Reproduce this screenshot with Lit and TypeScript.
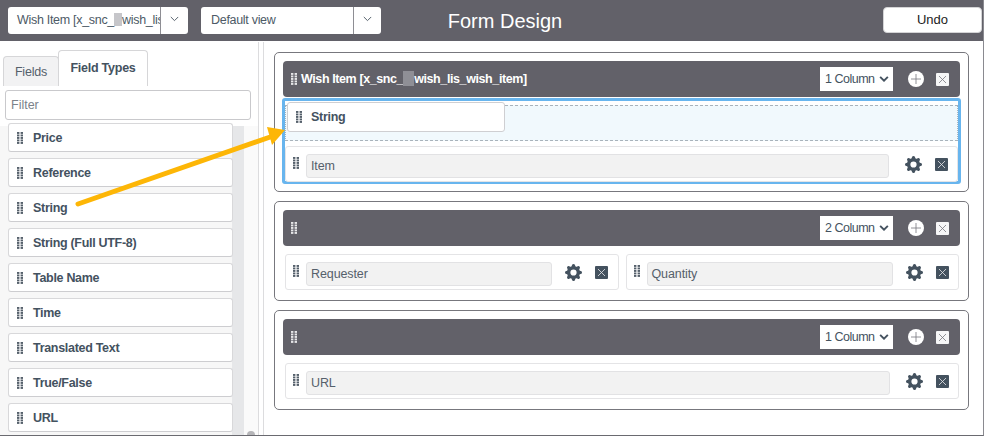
import { LitElement, html, css, svg } from "lit";
import { customElement } from "lit/decorators.js";

const chevron = (w = 9, sw = 1.2) => html`<svg width=${w} height="6" viewBox="0 0 11 7"><path d="M1 1l4.5 4.5L10 1" fill="none" stroke="currentColor" stroke-width=${sw}/></svg>`;

const handle = () => {
  const dots = [];
  for (let y = 0; y < 5; y++) for (let x = 0; x < 2; x++) dots.push(svg`<rect x=${x * 3.6} y=${y * 2.5} width="2.4" height="1.9"/>`);
  return html`<svg class="handle" width="6" height="12" viewBox="0 0 6 12" fill="currentColor">${dots}</svg>`;
};

const gear = html`<svg class="gear" width="17" height="17" viewBox="0 0 16 16" fill="#44525f"><path d="M9.405 1.05c-.413-1.4-2.397-1.4-2.81 0l-.1.34a1.464 1.464 0 0 1-2.105.872l-.31-.17c-1.283-.698-2.686.705-1.987 1.987l.169.311c.446.82.023 1.841-.872 2.105l-.34.1c-1.4.413-1.4 2.397 0 2.81l.34.1a1.464 1.464 0 0 1 .872 2.105l-.17.31c-.698 1.283.705 2.686 1.987 1.987l.311-.169a1.464 1.464 0 0 1 2.105.872l.1.34c.413 1.4 2.397 1.4 2.81 0l.1-.34a1.464 1.464 0 0 1 2.105-.872l.31.17c1.283.698 2.686-.705 1.987-1.987l-.169-.311a1.464 1.464 0 0 1 .872-2.105l.34-.1c1.4-.413 1.4-2.397 0-2.81l-.34-.1a1.464 1.464 0 0 1-.872-2.105l.17-.31c.698-1.283-.705-2.686-1.987-1.987l-.311.169a1.464 1.464 0 0 1-2.105-.872l-.1-.34zM8 10.93a2.929 2.929 0 1 1 0-5.86 2.929 2.929 0 0 1 0 5.858z"/></svg>`;

const xBox = (light = false) => html`<svg class="xbox" width="13" height="13" viewBox="0 0 13 13"><rect width="13" height="13" rx="1" fill=${light ? "#f6f6f7" : "#44525f"}/><path d="M3 3l7 7M10 3l-7 7" stroke=${light ? "#77777e" : "#e8eaec"} stroke-width="0.8"/></svg>`;

const plus = html`<svg class="plus" width="16" height="16" viewBox="0 0 16 16"><circle cx="8" cy="8" r="8" fill="#fff"/><path d="M8 3v10M3 8h10" stroke="#77777e" stroke-width="0.8"/></svg>`;

const TYPES = ["Price", "Reference", "String", "String (Full UTF-8)", "Table Name", "Time", "Translated Text", "True/False", "URL"];

@customElement("app-root")
export class AppRoot extends LitElement {
  static styles = css`
    :host { display: block; font-family: "Liberation Sans", Arial, sans-serif; color: #44525f; }
    * { box-sizing: border-box; }
    .page { position: relative; width: 984px; height: 436px; overflow: hidden; background: #fff;
      display: flex; flex-direction: column; border-right: 1px solid #8a8a90; border-bottom: 1px solid #6a6a70; }

    .top { height: 41px; flex: none; background: #626169; display: flex; align-items: flex-start; padding: 7px 1px 0 8px; }
    .pick { width: 180px; height: 27px; background: #fff; border-radius: 3px; display: flex; color: #4d5a66; font-size: 12.5px; letter-spacing: -0.3px; }
    .pick + .pick { margin-left: 13px; }
    .pick-text { flex: 1; min-width: 0; overflow: hidden; white-space: nowrap; padding-left: 9px; line-height: 27px; }
    .pick + .pick .pick-text { padding-left: 10px; }
    .pick-arrow { width: 28px; flex: none; border-left: 1px solid #8e8e94; display: flex; align-items: center; justify-content: center; color: #55606b; padding-bottom: 3px; }
    .red { display: inline-block; width: 8px; height: 13px; vertical-align: -2px; background: #c6c6ca; }
    .title { width: 248px; text-align: center; color: #fff; font-size: 20px; line-height: 28px; flex: none; }
    .undo { margin-left: auto; width: 99px; height: 26px; background: #fff; border-radius: 4px; border: 1px solid #d4d4d6; color: #222; font-size: 13px; text-align: center; line-height: 24px; }

    .body { flex: 1; min-height: 0; display: flex; margin-top: 1px; }
    .left { width: 259px; flex: none; border-right: 1px solid #dcdcde; display: flex; flex-direction: column; }
    .tabs { height: 44px; flex: none; display: flex; align-items: flex-end; padding-left: 3px; }
    .tab { border: 1px solid #d6d6d8; border-bottom: none; border-radius: 4px 4px 0 0; text-align: center; font-size: 12.5px; }
    .tab.off { width: 56px; height: 30px; background: #f2f2f3; line-height: 30px; color: #55606b; letter-spacing: -0.2px; }
    .tab.on { width: 90px; height: 36px; background: #fff; font-weight: 700; line-height: 34px; margin-left: -1px; letter-spacing: -0.25px; }
    .filter { height: 30px; flex: none; margin: 4px 0 2px 5px; width: 246px; border: 1px solid #c9c9cc; border-radius: 3px; padding: 0 5px; line-height: 28px; font-size: 12.5px; color: #7b828a; }
    .listwrap { flex: 1; min-height: 0; display: flex; }
    .list { width: 244px; flex: none; overflow: hidden; padding: 1px 11px 0 8px;
      background: linear-gradient(#fff, #fff) top / 100% 4px no-repeat, linear-gradient(90deg, #f7f7f7 232px, #e6e7e9 232px); }
    .list-in { display: flex; flex-direction: column; gap: 6px; }
    .item { height: 29px; flex: none; background: #fff; border: 1px solid #d8d8da; border-bottom-color: #cdcdd0; border-radius: 3px; display: flex; align-items: center; padding-left: 8px; font-size: 12.5px; letter-spacing: -0.3px; font-weight: 700; gap: 10px; }
    .item .handle { color: #55606b; }
    .rail { flex: 1; display: flex; justify-content: center; align-items: flex-end; background: linear-gradient(#fff, #fff) top / 100% 4px no-repeat, #fafafa; }
    .thumb { width: 8px; height: 4px; background: #b5b5b8; border-radius: 4px 4px 0 0; }

    .canvas { flex: 1; min-width: 0; margin-left: 4px; border-left: 1px solid #dcdcde; padding: 10px 14px 0 10px; display: flex; flex-direction: column; gap: 9px; }
    .section { border: 1px solid #77777d; border-radius: 5px; padding: 8px; height: 100px; }
    .section.first { height: 140px; }
    .head { height: 36px; background: #626169; border-radius: 4px; display: flex; align-items: center; padding: 0 11px 0 8px; color: #fff; }
    .head .handle { color: #e6e6e8; }
    .head-title { font-size: 12.5px; letter-spacing: -0.4px; font-weight: 700; margin: -1px 0 0 4px; white-space: nowrap; }
    .head-title .red { background: #8f8f96; width: 11px; height: 15px; vertical-align: -3px; }
    .col { margin-left: auto; width: 73px; height: 24px; background: #fff; font-size: 12.5px; letter-spacing: -0.5px; color: #44525f; display: flex; align-items: center; justify-content: space-between; padding: 0 4px 0 5px; white-space: nowrap; }
    .col svg { flex: none; }
    .plus { margin-left: 15px; flex: none; }
    .head .xbox { margin-left: 12px; flex: none; }
    .rows { margin: 8px 1px 0 2px; display: flex; gap: 7px; }
    .row { flex: 1; min-width: 0; height: 36px; border: 1px solid #e4e4e6; border-radius: 3px; background: #fff; display: flex; align-items: center; padding: 4px 0 0 7px; }
    .row .handle { color: #55606b; flex: none; margin-top: -7px; }
    .field { flex: 1; min-width: 0; height: 24px; background: #f2f2f2; border: 1px solid #e2e2e4; border-radius: 3px; margin-left: 7px; font-size: 12.5px; letter-spacing: -0.1px; line-height: 22px; padding-left: 4px; color: #55606b; }
    .gear { margin-left: 13px; flex: none; margin-top: -3px; }
    .wide .gear { margin-left: 16px; }
    .row .xbox { margin: -3px 10px 0 13px; flex: none; }
    .wide .xbox, .row + .row .xbox { margin-right: 9px; }
    .zone { margin: 1px -1px 0; height: 86px; border: 3px solid #68b5ee; border-radius: 3px; padding-top: 4px; display: flex; flex-direction: column; }
    .drop { height: 36px; margin-bottom: 5px; background: #f1f9fd; border: 1px dashed #a9b3bb; border-left-style: dotted; border-right-style: dotted; flex: none; }
    .zone .rows { margin: 0; }
    .drag { position: absolute; left: 287px; top: 102px; width: 218px; height: 30px; background: #fff; border: 1px solid #cfcfd2; border-radius: 3px; display: flex; align-items: center; padding-left: 8px; gap: 9px; font-size: 12.5px; letter-spacing: -0.3px; font-weight: 700; }
    .drag .handle { color: #55606b; }
    .arrow { position: absolute; left: 0; top: 0; pointer-events: none; }
  `;

  private fieldRow(name: string, wide = false) {
    return html`<div class="row ${wide ? "wide" : ""}">${handle()}<div class="field">${name}</div>${gear}${xBox()}</div>`;
  }

  private header(col: string, title?: unknown) {
    return html`<div class="head">${handle()}${title ? html`<span class="head-title">${title}</span>` : ""}
      <div class="col">${col}${chevron(10, 2.2)}</div>${plus}${xBox(true)}</div>`;
  }

  render() {
    return html`<div class="page">
      <div class="top">
        <div class="pick"><div class="pick-text">Wish Item [x_snc_<span class="red"></span>wish_lis</div><div class="pick-arrow">${chevron()}</div></div>
        <div class="pick"><div class="pick-text">Default view</div><div class="pick-arrow">${chevron()}</div></div>
        <div class="title">Form Design</div>
        <div class="undo">Undo</div>
      </div>
      <div class="body">
        <div class="left">
          <div class="tabs"><div class="tab off">Fields</div><div class="tab on">Field Types</div></div>
          <div class="filter">Filter</div>
          <div class="listwrap">
            <div class="list"><div class="list-in">${TYPES.map((t) => html`<div class="item">${handle()}<span>${t}</span></div>`)}</div></div>
            <div class="rail"><div class="thumb"></div></div>
          </div>
        </div>
        <div class="canvas">
          <div class="section first">
            ${this.header("1 Column", html`Wish Item [x_snc_<span class="red"></span>wish_lis_wish_item]`)}
            <div class="zone">
              <div class="drop"></div>
              <div class="rows">${this.fieldRow("Item", true)}</div>
            </div>
          </div>
          <div class="section">
            ${this.header("2 Column")}
            <div class="rows">${this.fieldRow("Requester")}${this.fieldRow("Quantity")}</div>
          </div>
          <div class="section">
            ${this.header("1 Column")}
            <div class="rows">${this.fieldRow("URL", true)}</div>
          </div>
        </div>
      </div>
      <div class="drag">${handle()}<span>String</span></div>
      <svg class="arrow" width="984" height="436"><path d="M78 204L276 135" stroke="#fdb606" stroke-width="5" stroke-linecap="round"/><polygon points="267,127 285,130 272,145" fill="#fdb606"/></svg>
    </div>`;
  }
}
